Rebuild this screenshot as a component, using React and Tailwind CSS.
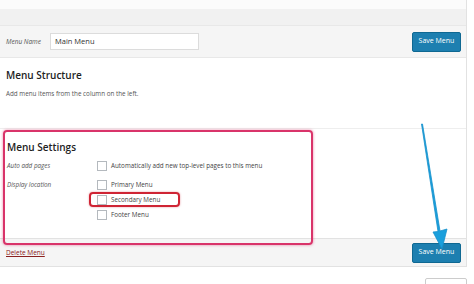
import React from "react";

function Box() {
  return <span className="block w-[10px] h-[10px] border border-[#b4b9be] bg-white shrink-0" />;
}

export default function App() {
  return (
    <div
      className="relative w-[474px] h-[284px] bg-white overflow-hidden text-[#444]"
      style={{ fontFamily: '"Open Sans", "Noto Sans", sans-serif' }}
    >
      <div className="w-[467px] border-r border-[#e2e2e2]">
        <div className="h-[9px] bg-[#fbfbfb]" />
        <div className="h-[16px] bg-[#f1f1f1]" />
        {/* header */}
        <div className="h-[33px] bg-[#f5f5f5] border-t border-[#e8e8e8] border-b border-[#dcdcdc] flex items-center justify-between pl-[6px] pr-[5px]">
          <div className="flex items-center">
            <span className="text-[6.5px] italic text-[#555] w-[44px]">Menu Name</span>
            <div className="w-[149px] h-[17px] bg-white border border-[#dcdcdc] flex items-center pl-[4px] text-[7.5px] text-[#333]">
              Main Menu
            </div>
          </div>
          <div className="w-[49px] h-[20px] rounded-[2px] bg-[#1d7fb0] border border-[#0f6892] flex items-center justify-center text-[7px] text-white">
            Save Menu
          </div>
        </div>
        {/* body */}
        <div className="h-[70px] px-[6px] pt-[10px]">
          <div className="text-[10px] font-semibold text-[#222] leading-[14px]">Menu Structure</div>
          <div className="text-[6.3px] text-[#555] mt-[7px]">Add menu items from the column on the left.</div>
        </div>
        <div className="h-px bg-[#eeeeee]" />
        <div className="h-[109px] px-[7px] pt-[11px]">
          <div className="text-[10px] font-semibold text-[#222] leading-[14px]">Menu Settings</div>
          <div className="flex items-center mt-[7px]">
            <span className="w-[90px] text-[6.3px] italic text-[#555]">Auto add pages</span>
            <Box />
            <span className="ml-[4px] text-[6.3px] text-[#444]">Automatically add new top-level pages to this menu</span>
          </div>
          <div className="flex mt-[9px]">
            <span className="w-[90px] text-[6.3px] italic text-[#555] leading-[10px]">Display location</span>
            <div className="flex flex-col gap-[5px]">
              <div className="flex items-center"><Box /><span className="ml-[4px] text-[6.3px] text-[#444]">Primary Menu</span></div>
              <div className="flex items-center"><Box /><span className="ml-[4px] text-[6.3px] text-[#444]">Secondary Menu</span></div>
              <div className="flex items-center"><Box /><span className="ml-[4px] text-[6.3px] text-[#444]">Footer Menu</span></div>
            </div>
          </div>
        </div>
        {/* footer */}
        <div className="h-[29px] bg-[#f5f5f5] border-t border-[#e2e2e2] border-b border-[#dcdcdc] flex items-center justify-between pl-[6px] pr-[5px]">
          <span className="text-[6.5px] text-[#8a2020] underline">Delete Menu</span>
          <div className="w-[49px] h-[20px] rounded-[2px] bg-[#1d7fb0] border border-[#0f6892] flex items-center justify-center text-[7px] text-white">
            Save Menu
          </div>
        </div>
      </div>
      {/* partially visible box at bottom */}
      <div className="absolute left-[425px] top-[278px] w-[42px] h-[14px] rounded-[2px] border border-[#cccccc] bg-white" />

      {/* annotations */}
      <div className="absolute left-[3px] top-[130px] w-[310px] h-[115px] rounded-[4px] border-2 border-[#d9346a] shadow-[0_0_3px_rgba(217,52,106,0.6)]" />
      <div className="absolute left-[89px] top-[192px] w-[91px] h-[15px] rounded-[4px] border-2 border-[#cf2434] shadow-[0_0_2px_rgba(207,36,52,0.5)]" />
      <svg className="absolute left-0 top-0" width="474" height="284" viewBox="0 0 474 284">
        <polygon points="421.5,124 422.5,124 440,231 447,229 442,249 433,232 438,231.5" fill="#1a9fdc" stroke="#1590cc" strokeWidth="0.8" strokeLinejoin="round" />
      </svg>
    </div>
  );
}
